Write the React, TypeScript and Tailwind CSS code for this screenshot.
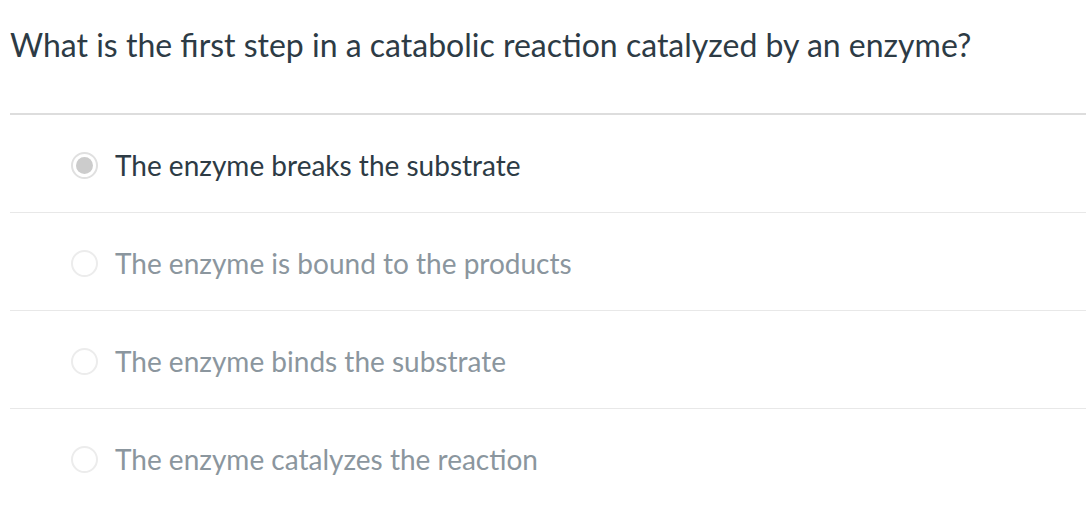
import React from "react";

const options = [
  { text: "The enzyme breaks the substrate", selected: true },
  { text: "The enzyme is bound to the products", selected: false },
  { text: "The enzyme binds the substrate", selected: false },
  { text: "The enzyme catalyzes the reaction", selected: false },
];

export default function App() {
  return (
    <div className="w-[1086px] h-[518px] bg-white overflow-hidden" style={{ fontFamily: "Lato, 'Noto Sans', sans-serif" }}>
      <div className="pl-[10px]">
        <h1 className="pt-[25px] h-[113px] text-[32px] leading-[40px] text-[#2d3b45] font-normal">
          What is the first step in a catabolic reaction catalyzed by an enzyme?
        </h1>
        <div className="h-[2px] bg-[#dddddd]" />
        {options.map((o, i) => (
          <div key={i}>
            {i > 0 && <div className="h-px bg-[#e8e8e8]" />}
            <div className="h-[97px] pt-[3px] flex items-center pl-[60px]">
              {o.selected ? (
                <div className="ml-[1px] w-[27px] h-[27px] rounded-full border-2 border-[#e0e0e0] flex items-center justify-center">
                  <div className="w-[17px] h-[17px] rounded-full bg-[#cccccc]" />
                </div>
              ) : (
                <div className="ml-[1px] w-[27px] h-[27px] rounded-full border-2 border-[#ececec]" />
              )}
              <span className={`ml-[17px] text-[28px] ${o.selected ? "text-[#2d3b45]" : "text-[#8b969e]"}`}>
                {o.text}
              </span>
            </div>
          </div>
        ))}
      </div>
    </div>
  );
}
